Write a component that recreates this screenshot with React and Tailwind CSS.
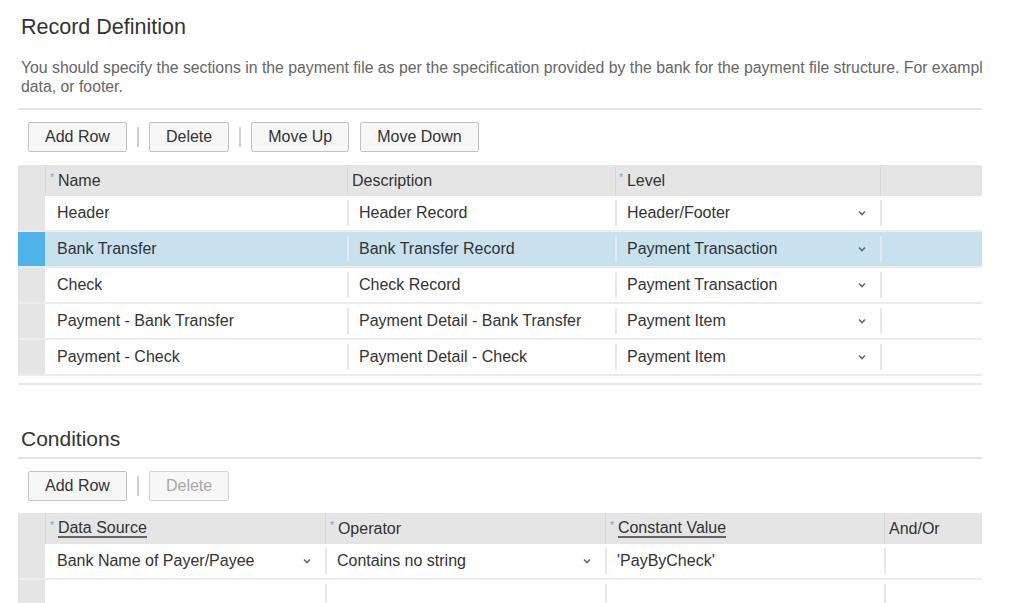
import React from "react";

const font = { fontFamily: '"Liberation Sans", Arial, sans-serif' };

function Chevron() {
  return (
    <svg width="8" height="6" viewBox="0 0 8 6" className="shrink-0">
      <path d="M1 1.5l3 3 3-3" fill="none" stroke="#666" strokeWidth="1.6" />
    </svg>
  );
}

function Btn({ children, disabled }) {
  return (
    <button
      className={
        "h-[30px] px-[16px] border rounded-[2px] text-[16px] bg-[#f7f7f7] " +
        (disabled ? "border-[#d4d4d4] text-[#a8a8a8]" : "border-[#c2c2c2] text-[#333]")
      }
    >
      {children}
    </button>
  );
}

function Sep() {
  return <div className="w-[2px] h-[20px] bg-[#cfcfcf] mx-[10px]" />;
}

function Req() {
  return <span className="text-[#4fb0e3] text-[10px] align-top mr-[4px] relative top-[-3px]">*</span>;
}

function Cell({ children, first, chevron }) {
  return (
    <div className="flex items-center h-full relative">
      {!first && <div className="absolute left-0 top-[4px] bottom-[4px] w-[2px] bg-[#e8e8e8]" />}
      <div className="flex items-center justify-between w-full pl-[12px] pr-[14px] truncate">
        <span className="truncate">{children}</span>
        {chevron && <Chevron />}
      </div>
    </div>
  );
}

const records = [
  ["Header", "Header Record", "Header/Footer"],
  ["Bank Transfer", "Bank Transfer Record", "Payment Transaction", true],
  ["Check", "Check Record", "Payment Transaction"],
  ["Payment - Bank Transfer", "Payment Detail - Bank Transfer", "Payment Item"],
  ["Payment - Check", "Payment Detail - Check", "Payment Item"],
];

export default function App() {
  const recCols = "grid-cols-[27px_302px_268px_265px_102px]";
  const condCols = "grid-cols-[27px_280px_280px_279px_98px]";
  return (
    <div className="w-[1024px] h-[603px] bg-white overflow-hidden text-[#333]" style={font}>
      <div className="pl-[18px] w-[982px]">
        <h1 className="text-[21.5px] pl-[3px] pt-[14px] leading-[26px] text-[#333]">Record Definition</h1>
        <div className="overflow-hidden">
          <p className="mt-[18px] pl-[3px] text-[15.8px] leading-[19px] text-[#666] whitespace-nowrap">
            You should specify the sections in the payment file as per the specification provided by the bank for the payment file structure. For example, header,
          </p>
        </div>
        <p className="pl-[3px] text-[15.8px] leading-[19px] text-[#666]">data, or footer.</p>
        <div className="mt-[12px] h-[2px] bg-[#e4e4e4]" />

        <div className="flex items-center mt-[12px] pl-[10px]">
          <Btn>Add Row</Btn>
          <Sep />
          <Btn>Delete</Btn>
          <Sep />
          <Btn>Move Up</Btn>
          <div className="w-[11px]" />
          <Btn>Move Down</Btn>
        </div>

        <div className="mt-[13px] border-b-[2px] border-[#e8e8e8] pb-[7px] text-[16px]">
          <div className={"grid h-[31px] bg-[#e5e5e5] " + recCols}>
            <div />
            <div className="flex items-center pl-[4px] border-l border-[#d8d8d8]"><Req />Name</div>
            <div className="flex items-center pl-[4px] border-l border-[#d8d8d8]">Description</div>
            <div className="flex items-center pl-[3px] border-l border-[#d8d8d8]"><Req />Level</div>
            <div className="border-l border-[#d8d8d8]" />
          </div>
          {records.map(([n, d, l, sel]) => (
            <div key={n} className={"grid h-[36px] border-b-[2px] border-[#ececec] " + recCols + (sel ? " bg-[#c8e1ee]" : "")}>
              <div className={sel ? "bg-[#4db3ea]" : "bg-[#e5e5e5]"} />
              <Cell first>{n}</Cell>
              <Cell>{d}</Cell>
              <Cell chevron>{l}</Cell>
              <Cell />
            </div>
          ))}
        </div>

        <h2 className="mt-[41px] pl-[3px] text-[21px] leading-[26px]">Conditions</h2>
        <div className="mt-[5px] h-[2px] bg-[#e4e4e4]" />

        <div className="flex items-center mt-[12px] pl-[10px]">
          <Btn>Add Row</Btn>
          <Sep />
          <Btn disabled>Delete</Btn>
        </div>

        <div className="mt-[12px] text-[16px]">
          <div className={"grid h-[31px] bg-[#e5e5e5] " + condCols}>
            <div />
            <div className="flex items-center pl-[4px] border-l border-[#d8d8d8]">
              <Req /><span className="border-b-[2px] border-[#666] leading-[17px]">Data Source</span>
            </div>
            <div className="flex items-center pl-[4px] border-l border-[#d8d8d8]"><Req />Operator</div>
            <div className="flex items-center pl-[4px] border-l border-[#d8d8d8]">
              <Req /><span className="border-b-[2px] border-[#666] leading-[17px]">Constant Value</span>
            </div>
            <div className="flex items-center pl-[4px] border-l border-[#d8d8d8]">And/Or</div>
          </div>
          <div className={"grid h-[36px] border-b-[2px] border-[#ececec] " + condCols}>
            <div className="bg-[#e5e5e5]" />
            <Cell first chevron>Bank Name of Payer/Payee</Cell>
            <Cell chevron>Contains no string</Cell>
            <Cell>'PayByCheck'</Cell>
            <Cell />
          </div>
          <div className={"grid h-[36px] " + condCols}>
            <div className="bg-[#e5e5e5]" />
            <Cell first />
            <Cell />
            <Cell />
            <Cell />
          </div>
        </div>
      </div>
    </div>
  );
}
